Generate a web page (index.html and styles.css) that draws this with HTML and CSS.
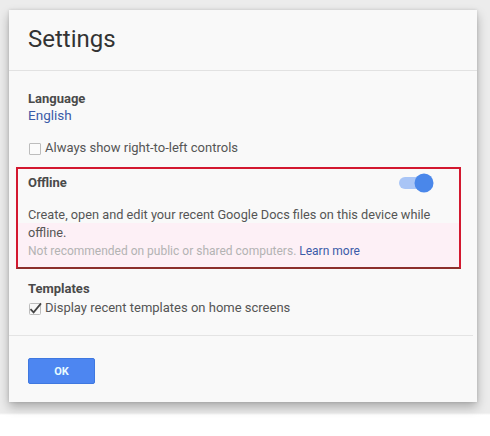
FILE: index.html
```html
<!DOCTYPE html>
<html lang="en">
<head>
<meta charset="utf-8">
<title>Settings</title>
<link rel="stylesheet" href="styles.css">
</head>
<body>
<div class="page">
  <div class="dialog">
    <div class="dialog-header">
      <h1 class="title">Settings</h1>
    </div>
    <div class="dialog-body">
      <div class="label">Language</div>
      <div class="link lang">English</div>
      <div class="check-row rtl">
        <span class="checkbox"></span>
        <span>Always show right-to-left controls</span>
      </div>
      <div class="offline">
        <div class="offline-head">
          <span class="label">Offline</span>
          <svg class="toggle" width="36" height="20" viewBox="0 0 36 20">
            <rect x="1" y="4" width="28" height="12" rx="6" fill="#a9c5f6"/>
            <circle cx="26" cy="10" r="9.5" fill="#4a87ea"/>
          </svg>
        </div>
        <p class="desc">Create, open and edit your recent Google Docs files on this device while offline.</p>
        <p class="note">Not recommended on public or shared computers. <span class="link">Learn more</span></p>
      </div>
      <div class="label">Templates</div>
      <div class="check-row">
        <svg class="checked" width="14" height="16" viewBox="0 0 14 16">
          <rect x="1.5" y="3.5" width="11" height="11" rx="1" fill="none" stroke="#bdbdbd"/>
          <path d="M2.5 9.2 L5.6 12.4 L13 3.4" fill="none" stroke="#444" stroke-width="1.7"/>
        </svg>
        <span>Display recent templates on home screens</span>
      </div>
    </div>
    <div class="dialog-footer">
      <button class="ok">OK</button>
    </div>
  </div>
</div>
</body>
</html>
```
FILE: styles.css
```css
html, body {
  margin: 0;
  padding: 0;
}
body {
  width: 490px;
  height: 436px;
  overflow: hidden;
  font-family: Roboto, "Liberation Sans", sans-serif;
  background: linear-gradient(#ececec 0, #ececec 413px, #ffffff 415px);
}
.page {
  padding: 10px 13px 0 9px;
}
.dialog {
  width: 468px;
  background: #f9f9f9;
  box-shadow: 0 5px 10px rgba(0, 0, 0, 0.28), 0 0 3px rgba(0, 0, 0, 0.12);
}
.dialog-header {
  padding: 13px 19px 15px;
  border-bottom: 1px solid #e2e2e2;
}
.title {
  margin: 0;
  font-size: 24px;
  line-height: 32px;
  font-weight: 400;
  color: #333;
}
.dialog-body {
  padding: 20px 19px 19px 19px;
  margin-right: 4px;
  border-bottom: 1px solid #e4e4e4;
  font-size: 13px;
  line-height: 16px;
  color: #555;
}
.label {
  font-weight: 700;
  color: #4a4a4a;
  font-size: 13px;
  line-height: 16px;
}
.link {
  color: #3b5ba8;
}
.lang {
  font-size: 13.5px;
}
.check-row {
  display: flex;
  align-items: center;
  gap: 4px;
  line-height: 17px;
  margin-top: 1px;
}
.check-row.rtl {
  margin-top: 16px;
}
.checkbox {
  width: 10px;
  height: 10px;
  margin-left: 1px;
  border: 1px solid #bdbdbd;
  border-radius: 1px;
  background: #fbfbfb;
  margin-top: 2px;
}
.checked {
  margin-left: 0;
  margin-right: -1px;
  margin-top: 2px;
}
.offline {
  margin: 11px -7px 12px -12px;
  border: 2px solid #d3182f;
  border-bottom-color: #8c2f2c;
  padding: 4px 12px 8px 10px;
  background: linear-gradient(#f9f9f9 0, #f9f9f9 54px, #fdf0f6 54px);
}
.offline-head {
  display: flex;
  align-items: center;
  justify-content: space-between;
  height: 19px;
}
.toggle {
  display: block;
  margin-right: 13px;
}
.desc {
  margin: 14px 0 0;
  font-size: 12.75px;
  line-height: 18px;
  color: #555;
}
.note {
  margin: 1px 0 0;
  font-size: 12px;
  line-height: 16px;
  color: #b3b3b3;
}
.dialog-footer {
  padding: 22px 19px 18px;
}
.ok {
  display: block;
  width: 67px;
  height: 26px;
  padding: 0;
  border: 1px solid #3f78e0;
  border-radius: 2px;
  background: #4d86f1;
  color: #e8fbff;
  font-family: Roboto, "Liberation Sans", sans-serif;
  font-size: 11px;
  font-weight: 700;
}
```
